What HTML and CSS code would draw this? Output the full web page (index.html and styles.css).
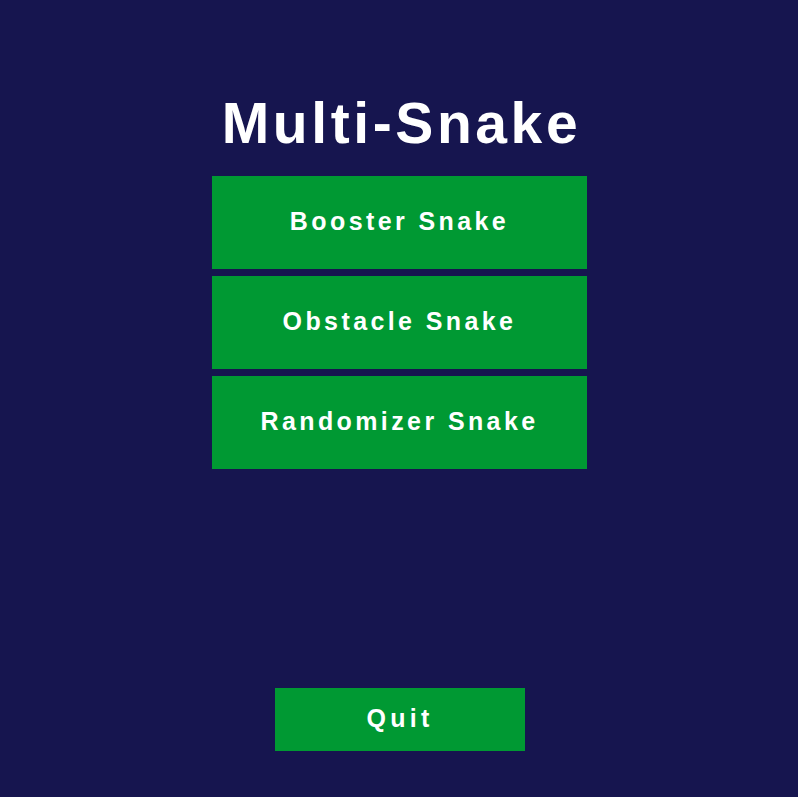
FILE: index.html
```html
<!DOCTYPE html>
<html lang="en">
<head>
<meta charset="utf-8">
<title>Multi-Snake</title>
<link rel="stylesheet" href="styles.css">
</head>
<body>
  <main class="menu">
    <h1 class="title">Multi-Snake</h1>
    <nav class="modes">
      <button class="btn btn-mode">Booster Snake</button>
      <button class="btn btn-mode">Obstacle Snake</button>
      <button class="btn btn-mode">Randomizer Snake</button>
    </nav>
    <button class="btn btn-quit">Quit</button>
  </main>
</body>
</html>
```

FILE: styles.css
```css
html, body {
  margin: 0;
  padding: 0;
  height: 100%;
}

body {
  background: #16154f;
  font-family: "Liberation Sans", Arial, sans-serif;
  color: #ffffff;
}

.menu {
  height: 100%;
  display: flex;
  flex-direction: column;
  align-items: center;
  box-sizing: border-box;
  padding-top: 92px;
}

.title {
  margin: 0 0 0 5px;
  font-size: 57px;
  line-height: 63px;
  font-weight: bold;
  letter-spacing: 3.6px;
}

.modes {
  margin-top: 21px;
  margin-left: 1px;
  display: flex;
  flex-direction: column;
  gap: 7px;
}

.btn {
  border: 0;
  padding: 0 0 2px 0;
  background: #009933;
  color: #ffffff;
  font-family: "Liberation Sans", Arial, sans-serif;
  font-weight: bold;
  font-size: 25px;
  letter-spacing: 3.4px;
  cursor: pointer;
}

.btn-mode {
  width: 375px;
  height: 93px;
}

.btn-quit {
  margin-top: 219px;
  margin-left: 2px;
  width: 250px;
  height: 63px;
  letter-spacing: 4.3px;
}
```
